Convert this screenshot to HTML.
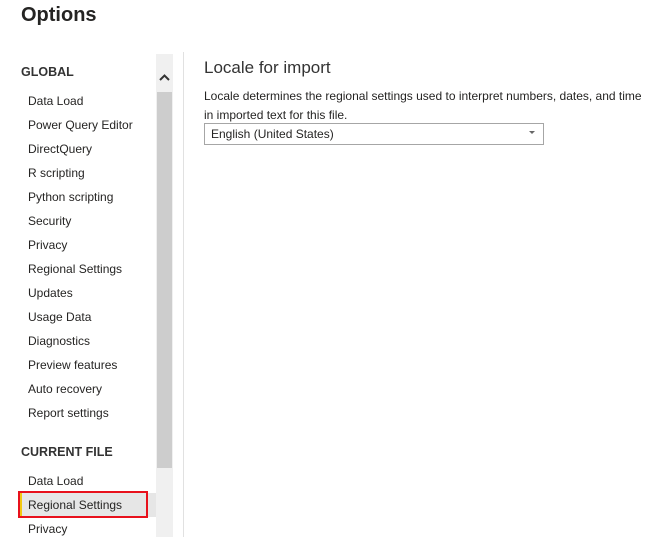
<!DOCTYPE html>
<html><head><style>
body{margin:0;width:647px;height:537px;overflow:hidden;background:#fff;font-family:"Liberation Sans",sans-serif;color:#252423;position:relative}
.a{position:absolute;white-space:nowrap}
.it{position:absolute;left:28px;font-size:12px;line-height:14px}
.h{position:absolute;left:21px;font-size:12.5px;font-weight:bold;color:#333}
</style></head><body>
<div class="a" style="left:21px;top:4px;font-size:20px;font-weight:bold;color:#252423">Options</div>
<div class="h" style="top:65px">GLOBAL</div>
<div class="it" style="top:94px">Data Load</div>
<div class="it" style="top:118px">Power Query Editor</div>
<div class="it" style="top:142px">DirectQuery</div>
<div class="it" style="top:166px">R scripting</div>
<div class="it" style="top:190px">Python scripting</div>
<div class="it" style="top:214px">Security</div>
<div class="it" style="top:238px">Privacy</div>
<div class="it" style="top:262px">Regional Settings</div>
<div class="it" style="top:286px">Updates</div>
<div class="it" style="top:310px">Usage Data</div>
<div class="it" style="top:334px">Diagnostics</div>
<div class="it" style="top:358px">Preview features</div>
<div class="it" style="top:382px">Auto recovery</div>
<div class="it" style="top:406px">Report settings</div>
<div class="h" style="top:445px">CURRENT FILE</div>
<div class="it" style="top:474px">Data Load</div>
<div class="a" style="left:20px;top:493px;width:136px;height:24px;background:#e6e6e6"></div>
<div class="a" style="left:20px;top:493px;width:2px;height:24px;background:#f2c811"></div>
<div class="a" style="left:18px;top:491px;width:126px;height:23px;border:2px solid #e8111c"></div>
<div class="it" style="top:498px">Regional Settings</div>
<div class="it" style="top:522px">Privacy</div>
<div class="a" style="left:156px;top:54px;width:17px;height:483px;background:#f0f0f0"></div>
<div class="a" style="left:157px;top:92px;width:15px;height:376px;background:#cdcdcd"></div>
<svg class="a" style="left:158px;top:72px" width="13" height="10"><path d="M2 8 L6.5 3.5 L11 8" stroke="#333" stroke-width="2" fill="none"/></svg>
<div class="a" style="left:183px;top:52px;width:1px;height:485px;background:#e1e1e1"></div>
<div class="a" style="left:204px;top:58px;font-size:17px;color:#333">Locale for import</div>
<div class="a" style="left:204px;top:87px;font-size:12px;line-height:19px;color:#252423">Locale determines the regional settings used to interpret numbers, dates, and time<br>in imported text for this file.</div>
<div class="a" style="left:204px;top:123px;width:338px;height:20px;border:1px solid #a6a6a6"></div>
<div class="a" style="left:211px;top:127px;font-size:12px">English (United States)</div>
<div class="a" style="left:529px;top:131px;width:0;height:0;border-left:3px solid transparent;border-right:3px solid transparent;border-top:3px solid #666"></div>
</body></html>
